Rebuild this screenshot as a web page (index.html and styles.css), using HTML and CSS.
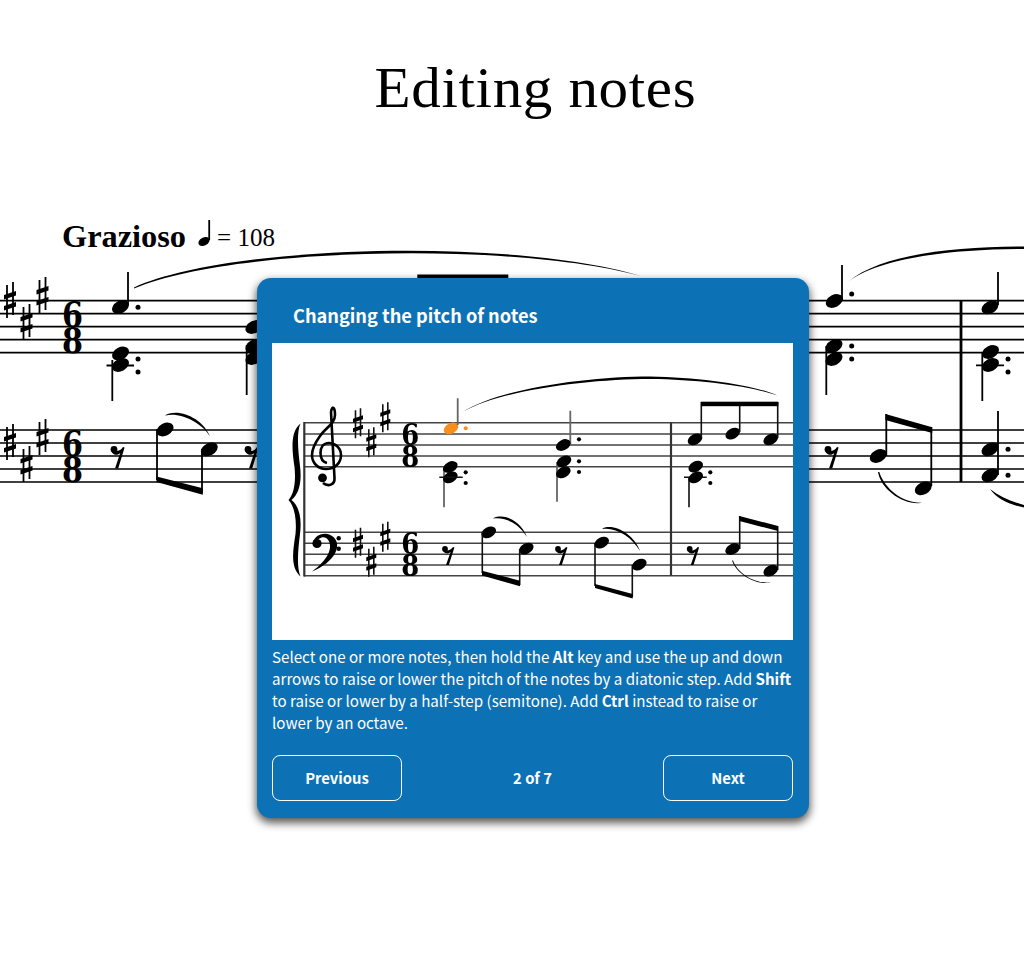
FILE: index.html
```html
<!DOCTYPE html>
<html lang="en">
<head>
<meta charset="utf-8">
<title>Editing notes</title>
<link rel="stylesheet" href="styles.css">
</head>
<body>
<main class="page">
  <h1 class="title"><span class="title-text">Editing notes</span></h1>

  <svg class="score" viewBox="0 210 1024 310" width="1024" height="310" aria-label="Piano score">
    <defs>
      <g id="head"><ellipse rx="9.1" ry="6.1" transform="rotate(-28)"/></g>
      <g id="sharp">
        <path class="stem" d="M-3 -15V18M3 -18V15"/>
        <path d="M-6 -5L6 -9V-4.5L-6 -.5ZM-6 6L6 2V6.5L-6 10.5Z"/>
      </g>
      <g id="rest">
        <circle cx="-2" cy="0" r="3.4"/>
        <path d="M-3 1C1 2.5 5 1 7 -2.5L8.6 -2L2.2 19H-1L4.2 3.5C2 6 -2 6 -4 3Z"/>
      </g>
      <g id="keysig">
        <use href="#sharp" x="10" y="0"/>
        <use href="#sharp" x="26.5" y="22"/>
        <use href="#sharp" x="42.5" y="-5"/>
      </g>
      <g id="staff">
        <path d="M0 0H1024M0 13H1024M0 26H1024M0 39H1024M0 52H1024"/>
      </g>
    </defs>

    <text class="tempo-word" x="62" y="247" textLength="124" lengthAdjust="spacingAndGlyphs">Grazioso</text>
    <use href="#head" transform="translate(204 241.5) scale(.66)"/>
    <path class="stem" d="M209.2 220V240"/>
    <text class="tempo-num" x="217" y="246" textLength="58" lengthAdjust="spacingAndGlyphs">= 108</text>

    <use class="staff-line" href="#staff" y="300.7"/>
    <use class="staff-line" href="#staff" y="430"/>
    <path class="bar" d="M961 301V482"/>

    <use href="#keysig" y="300"/>
    <use href="#keysig" y="442"/>
    <text class="meter" x="62" y="326.5" textLength="21" lengthAdjust="spacingAndGlyphs">6</text>
    <text class="meter" x="62" y="352.5" textLength="21" lengthAdjust="spacingAndGlyphs">8</text>
    <text class="meter" x="62" y="455.5" textLength="21" lengthAdjust="spacingAndGlyphs">6</text>
    <text class="meter" x="62" y="481.5" textLength="21" lengthAdjust="spacingAndGlyphs">8</text>

    <!-- left, upper staff -->
    <use href="#head" x="120.5" y="307"/>
    <path class="stem" d="M128 272V305M112.3 360V401M106.5 365.5H134M246.7 345V395"/>
    <circle cx="138" cy="307.3" r="2.5"/>
    <use href="#head" x="120.5" y="353.5"/>
    <use href="#head" x="120.5" y="365"/>
    <circle cx="138" cy="359" r="2.5"/>
    <circle cx="138" cy="372" r="2.5"/>
    <use href="#head" x="254" y="327"/>
    <use href="#head" x="254" y="346"/>
    <use href="#head" x="254" y="358"/>
    <path d="M134 287.5C230 244 520 237 648 278C520 240.5 230 247 134 288.5Z" class="slur"/>
    <rect x="417.3" y="274.5" width="91" height="4"/>

    <!-- left, lower staff -->
    <use href="#rest" x="116" y="449.5"/>
    <use href="#rest" x="250" y="449.5"/>
    <use href="#head" x="165" y="429.5"/>
    <use href="#head" x="209.3" y="449.3"/>
    <path class="stem" d="M157 429V480M202 449V493"/>
    <path d="M156.5 476.5L202.8 488.3V494.8L156.5 482Z"/>
    <path class="slur" d="M165.5 415C180 408 203 419 210 436.5C202 423 181 412 165.5 415.5Z"/>

    <!-- right -->
    <use href="#head" x="834.3" y="301"/>
    <path class="stem" d="M842 265V300M826.3 346V395M998 272V305M982.3 352V401M976 365.3H1004M886.3 414V456M931.3 427V486M998 411V475"/>
    <circle cx="851.7" cy="294" r="2.5"/>
    <path class="slur" d="M848.5 281.5C880 255 950 246.5 1026 246.5V249C950 249 880 258 848.5 281.5Z"/>
    <use href="#head" x="834" y="346"/>
    <use href="#head" x="834" y="359"/>
    <circle cx="851.7" cy="346" r="2.5"/>
    <circle cx="851.7" cy="359" r="2.5"/>
    <use href="#head" x="990" y="307.3"/>
    <use href="#head" x="990.5" y="352"/>
    <use href="#head" x="990.5" y="365"/>
    <circle cx="1008" cy="359" r="2.5"/>
    <circle cx="1008" cy="372" r="2.5"/>
    <use href="#rest" x="830" y="449.5"/>
    <use href="#head" x="878.3" y="456"/>
    <use href="#head" x="923.3" y="488.3"/>
    <path d="M885.4 414L932.2 427.3V433L885.4 420Z"/>
    <path class="slur" d="M878 472C881 490 905 507 924 502.5C905 504.5 885 490 879.3 472Z"/>
    <use href="#head" x="990" y="449.3"/>
    <use href="#head" x="990" y="475.3"/>
    <circle cx="1008" cy="449.3" r="2.5"/>
    <circle cx="1008" cy="475.3" r="2.5"/>
    <path class="slur" d="M990 489C1000 497 1012 502 1026 505.5V508C1010 505 997 499 990 489Z"/>
  </svg>

  <section class="dialog">
    <h2 class="dialog-title">Changing the pitch of notes</h2>
    <div class="figure">
      <svg class="figure-art" viewBox="272 343 521 297" width="521" height="297" aria-label="Changing a note's pitch in the score">
        <defs>
          <g id="h2"><ellipse rx="7.8" ry="5.2" transform="rotate(-28)"/></g>
          <g id="s2">
            <path class="stem-s" d="M-2.5 -13V15M2.5 -15V13"/>
            <path d="M-5 -4.5L5 -8V-4L-5 -.5ZM-5 5L5 1.5V5.5L-5 9Z"/>
          </g>
          <g id="r2">
            <circle cx="-2" cy="0" r="2.9"/>
            <path d="M-3 1C1 2 4 1 6 -2L7.4 -1.6L1.8 16H-1L3.6 3C2 5 -2 5 -3.6 2.5Z"/>
          </g>
          <g id="ks2">
            <use href="#s2" x="358" y="0"/>
            <use href="#s2" x="371.3" y="19"/>
            <use href="#s2" x="385.3" y="-6"/>
          </g>
        </defs>

        <path class="line" d="M304 422.7H793M304 434H793M304 445H793M304 456H793M304 466.7H793M304 532.3H793M304 543.3H793M304 554.3H793M304 565H793M304 575.7H793"/>
        <path class="bar-s" d="M304.3 422V576.5M671 422.7V575.7"/>
        <path d="M300.5 423.5C290 432 292 450 294.5 467C296 482 294 494 288.5 500C294 506 297 518 295.5 534C293 551 290 567 300.5 576.5C296.5 567 298 550 300 534C302 518 299 506 291.5 500C299 494 302 482 300 466C298 450 296.5 432 300.5 423.5Z"/>

        <path class="clef" d="M331 412C332 405 335 407 335 415C335 424 325 428 320 436C315 443 312 448 312 455C312 463 318 469 326 469C335 469 341 463 341 455C341 448 335 443 329 443C323 443 320.5 448 320.5 453C320.5 458 323 462 327 463M331 412L334.5 478C335 485 328 487 323 483"/>
        <circle cx="322.5" cy="477.8" r="4.4"/>
        <circle cx="317" cy="543.5" r="4.6"/>
        <path d="M313 542C316 533 328 531 334 537.5C342 546 335 562 312 571.5C328 560 333 548 328.5 540.5C325 535 318 537 316 544Z"/>
        <circle cx="338.7" cy="538.3" r="2.2"/>
        <circle cx="338.7" cy="548.7" r="2.2"/>

        <use href="#ks2" y="423.3"/>
        <use href="#ks2" y="542.7"/>
        <text class="meter-s" x="401.3" y="444.5" textLength="18" lengthAdjust="spacingAndGlyphs">6</text>
        <text class="meter-s" x="401.3" y="466.5" textLength="18" lengthAdjust="spacingAndGlyphs">8</text>
        <text class="meter-s" x="401.3" y="553.8" textLength="18" lengthAdjust="spacingAndGlyphs">6</text>
        <text class="meter-s" x="401.3" y="575.8" textLength="18" lengthAdjust="spacingAndGlyphs">8</text>

        <use class="note-on" href="#h2" x="451" y="428.3"/>
        <circle class="note-on" cx="465.7" cy="428.3" r="2"/>
        <path class="stem-g" d="M457.7 398.3V425M444 470V507.3M557 462V501.7M570.3 410.7V445"/>
        <path class="slur" d="M462.5 412C500 388 590 376.5 650 376.5C700 377.5 750 384 777.5 395.5C750 386 700 379.5 650 379C590 379 500 390 462.5 412Z"/>
        <use href="#h2" x="450.3" y="467"/>
        <use href="#h2" x="450.3" y="477.3"/>
        <path class="stem-s" d="M439.3 477.3H462.7M684 477.3H706.7"/>
        <circle cx="465.7" cy="472.3" r="2.1"/>
        <circle cx="465.7" cy="483" r="2.1"/>

        <use href="#h2" x="563.3" y="445"/>
        <circle cx="579" cy="439.3" r="2.1"/>
        <use href="#h2" x="564" y="461.3"/>
        <use href="#h2" x="563.3" y="472.3"/>
        <circle cx="579" cy="461.3" r="2.1"/>
        <circle cx="579" cy="472" r="2.1"/>

        <use href="#h2" x="695" y="439.3"/>
        <use href="#h2" x="732.7" y="433.7"/>
        <use href="#h2" x="770.7" y="439.3"/>
        <path class="stem-s" d="M701.3 402V438M739.7 402V432M777.7 402V438M689 478V507.3"/>
        <rect x="701" y="401.7" width="77.3" height="4.5"/>
        <use href="#h2" x="695.7" y="466.7"/>
        <use href="#h2" x="695.7" y="477.3"/>
        <circle cx="710.3" cy="472.3" r="2.1"/>
        <circle cx="710.3" cy="483" r="2.1"/>

        <use href="#r2" x="447" y="549"/>
        <use href="#r2" x="560" y="549"/>
        <use href="#r2" x="691.7" y="549"/>

        <use href="#h2" x="488.7" y="532.3"/>
        <use href="#h2" x="526.3" y="548.7"/>
        <path class="stem-s" d="M482.3 532V573M519.7 549V585M595 543V586M632.3 565V597M739.7 516V549M777.7 526V570"/>
        <path d="M482 570.7L520 580.7V586.2L482 575.5Z"/>
        <path class="slur" d="M493.5 518C505 513 521 521 527 537C519 524 506 517 493.5 518.5Z"/>

        <use href="#h2" x="601.7" y="542.7"/>
        <use href="#h2" x="639.3" y="564.7"/>
        <path d="M595 584L632.7 594V598.5L595 588Z"/>
        <path class="slur" d="M602.5 528.5C614 523 634 534 640 551C632 537 616 527 602.5 529Z"/>

        <use href="#h2" x="732.7" y="549"/>
        <use href="#h2" x="770.7" y="570.7"/>
        <path d="M739.4 516L778 526V531L739.4 521Z"/>
        <path class="slur" d="M732 560.5C736 573 755 586 771 582.5C755 584 738 574 733 560.5Z"/>
      </svg>
    </div>
    <p class="dialog-text">Select one or more notes, then hold the <b>Alt</b> key and use the up and down arrows to raise or lower the pitch of the notes by a diatonic step. Add <b>Shift</b> to raise or lower by a half-step (semitone). Add <b>Ctrl</b> instead to raise or lower by an octave.</p>
    <div class="dialog-nav">
      <button class="nav-btn" type="button">Previous</button>
      <span class="nav-count">2 of 7</span>
      <button class="nav-btn" type="button">Next</button>
    </div>
  </section>
</main>
</body>
</html>
```

FILE: styles.css
```css
* { box-sizing: border-box; }

html, body {
  margin: 0;
  padding: 0;
  background: #fff;
}

.page {
  position: relative;
  width: 1024px;
  height: 958px;
  overflow: hidden;
}

.title {
  margin: 0;
  padding: 56px 0 0 46px;
  height: 210px;
  text-align: center;
  font-family: "Liberation Serif", serif;
  font-weight: 400;
  font-size: 56px;
  line-height: 64px;
  letter-spacing: .6px;
  color: #000;
}

.title-text {
  display: inline-block;
  transform: scaleX(1.055);
}

.score {
  display: block;
  fill: #000;
}

.staff-line {
  fill: none;
  stroke: #000;
  stroke-width: 1.7;
}

.stem {
  fill: none;
  stroke: #000;
  stroke-width: 1.8;
}

.bar {
  fill: none;
  stroke: #000;
  stroke-width: 2.8;
}

.tempo-word {
  font-family: "Liberation Serif", serif;
  font-weight: 700;
  font-size: 31px;
}

.tempo-num {
  font-family: "Liberation Serif", serif;
  font-size: 25px;
}

.meter, .meter-s {
  font-family: "DejaVu Serif", serif;
  font-weight: 700;
}

.meter { font-size: 35px; }
.meter-s { font-size: 30px; }

.dialog {
  position: absolute;
  left: 257px;
  top: 278px;
  width: 552px;
  height: 540px;
  padding: 0 16px 0 15px;
  display: flex;
  flex-direction: column;
  background: #0d72b5;
  border-radius: 14px;
  box-shadow: 0 4px 8px 1px rgba(0, 0, 0, .65);
  color: #fff;
  font-family: "Noto Sans CJK SC", "Noto Sans", sans-serif;
}

.dialog-title {
  margin: 0;
  height: 65px;
  padding: 23px 0 0 21px;
  font-size: 18.2px;
  line-height: 28px;
  font-weight: 700;
}

.figure {
  height: 297px;
  background: #fff;
}

.figure-art {
  display: block;
  fill: #000;
  filter: blur(.35px);
}

.line {
  fill: none;
  stroke: #444;
  stroke-width: 1.6;
}

.bar-s {
  fill: none;
  stroke: #333;
  stroke-width: 2.2;
}

.stem-s {
  fill: none;
  stroke: #111;
  stroke-width: 1.6;
}

.stem-g {
  fill: none;
  stroke: #666;
  stroke-width: 1.8;
}

.clef {
  fill: none;
  stroke: #000;
  stroke-width: 2.6;
}

.note-on {
  fill: #f5901e;
}

.dialog-text {
  margin: 5px 0 0;
  font-size: 15.15px;
  line-height: 22px;
  font-weight: 400;
}

.dialog-nav {
  margin-top: 22px;
  display: flex;
  align-items: center;
  justify-content: space-between;
}

.nav-btn {
  width: 130px;
  height: 46px;
  padding: 0;
  background: transparent;
  border: 1px solid #fff;
  border-radius: 8px;
  color: #fff;
  font: 700 14.8px/22px "Noto Sans CJK SC", "Noto Sans", sans-serif;
}

.nav-count {
  font-size: 14.8px;
  line-height: 22px;
  font-weight: 700;
}
```
